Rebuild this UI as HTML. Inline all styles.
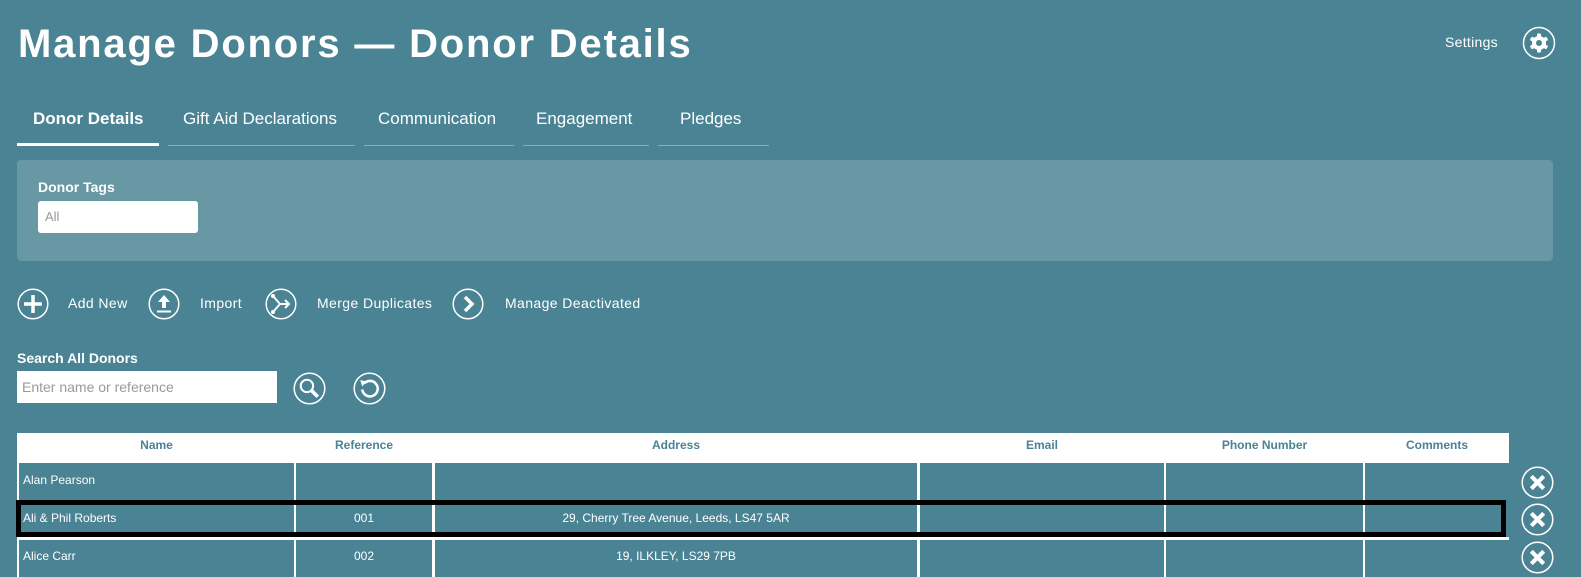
<!DOCTYPE html>
<html><head><meta charset="utf-8"><style>
*{margin:0;padding:0;box-sizing:border-box}
body{width:1581px;height:577px;overflow:hidden;background:#4a8393;font-family:"Liberation Sans",sans-serif;color:#fff;position:relative}
.a{position:absolute;white-space:nowrap}
.t{font-size:17px}
.ul{position:absolute;height:1px;background:#86aeb9;top:144px}
.lbl{font-size:14px;font-weight:bold}
.act{font-size:14px;letter-spacing:0.4px}
.cell{position:absolute;background:#4a8393;font-size:12px;line-height:1}
.th{position:absolute;top:438px;font-size:12px;color:#4a8393;font-weight:bold;text-align:center}
svg{position:absolute}
</style></head><body>
<div class="a" style="left:18px;top:22px;font-size:40px;font-weight:bold;letter-spacing:1.8px">Manage Donors — Donor Details</div>
<div class="a" style="left:1445px;top:34px;font-size:14px;letter-spacing:0.3px">Settings</div>
<svg style="left:1522px;top:26px" width="34" height="34" viewBox="0 0 34 34"><circle cx="17" cy="17" r="15.5" fill="none" stroke="#fff" stroke-width="1.5"/><g fill="#fff"><circle cx="17" cy="17" r="7"/><rect x="15" y="7.5" width="4" height="19" rx="1"/><rect x="15" y="7.5" width="4" height="19" rx="1" transform="rotate(60 17 17)"/><rect x="15" y="7.5" width="4" height="19" rx="1" transform="rotate(120 17 17)"/></g><circle cx="17" cy="17" r="3" fill="#4a8393"/></svg>

<div class="a t" style="left:33px;top:109px;font-weight:bold">Donor Details</div>
<div class="a t" style="left:183px;top:109px">Gift Aid Declarations</div>
<div class="a t" style="left:378px;top:109px">Communication</div>
<div class="a t" style="left:536px;top:109px">Engagement</div>
<div class="a t" style="left:680px;top:109px">Pledges</div>
<div class="ul" style="left:17px;width:142px;height:3px;top:143px;background:#fff"></div>
<div class="ul" style="left:168px;width:187px;top:145px"></div>
<div class="ul" style="left:364px;width:150px;top:145px"></div>
<div class="ul" style="left:523px;width:126px;top:145px"></div>
<div class="ul" style="left:658px;width:111px;top:145px"></div>

<div class="a" style="left:17px;top:160px;width:1536px;height:101px;background:#6798a4;border-radius:4px"></div>
<div class="a lbl" style="left:38px;top:179px">Donor Tags</div>
<div class="a" style="left:38px;top:201px;width:160px;height:32px;background:#fff;border-radius:3px;color:#999;font-size:13px;padding:8px 7px">All</div>

<svg style="left:17px;top:288px" width="32" height="32" viewBox="0 0 32 32"><circle cx="16" cy="16" r="14.8" fill="none" stroke="#fff" stroke-width="1.5"/><path d="M16 7v18M7 16h18" stroke="#fff" stroke-width="3.5"/></svg>
<div class="a act" style="left:68px;top:295px">Add New</div>
<svg style="left:148px;top:288px" width="32" height="32" viewBox="0 0 32 32"><circle cx="16" cy="16" r="14.8" fill="none" stroke="#fff" stroke-width="1.5"/><path d="M16 7l-6 7h4v6h4v-6h4z" fill="#fff"/><path d="M9 23.5h14" stroke="#fff" stroke-width="2"/></svg>
<div class="a act" style="left:200px;top:295px">Import</div>
<svg style="left:265px;top:288px" width="32" height="32" viewBox="0 0 32 32"><circle cx="16" cy="16" r="14.8" fill="none" stroke="#fff" stroke-width="1.5"/><path d="M8 8l7 8-7 8M15 16h9M20 12l4 4-4 4" fill="none" stroke="#fff" stroke-width="2"/><circle cx="8" cy="8" r="2" fill="#fff"/><circle cx="8" cy="24" r="2" fill="#fff"/></svg>
<div class="a act" style="left:317px;top:295px">Merge Duplicates</div>
<svg style="left:452px;top:288px" width="32" height="32" viewBox="0 0 32 32"><circle cx="16" cy="16" r="14.8" fill="none" stroke="#fff" stroke-width="1.5"/><path d="M13 9l7 7-7 7" fill="none" stroke="#fff" stroke-width="3.5"/></svg>
<div class="a act" style="left:505px;top:295px">Manage Deactivated</div>

<div class="a lbl" style="left:17px;top:350px">Search All Donors</div>
<div class="a" style="left:17px;top:371px;width:260px;height:32px;background:#fff;color:#999;font-size:14px;padding:8px 5px">Enter name or reference</div>
<svg style="left:293px;top:372px" width="33" height="33" viewBox="0 0 32 32"><circle cx="16" cy="16" r="14.8" fill="none" stroke="#fff" stroke-width="1.5"/><circle cx="13.5" cy="13.5" r="6" fill="none" stroke="#fff" stroke-width="2"/><path d="M18 18l6 6" stroke="#fff" stroke-width="3.5"/></svg>
<svg style="left:353px;top:372px" width="33" height="33" viewBox="0 0 32 32"><circle cx="16" cy="16" r="14.8" fill="none" stroke="#fff" stroke-width="1.5"/><path d="M11 11a7.5 7.5 0 1 1-2 6" fill="none" stroke="#fff" stroke-width="2.5"/><path d="M7 8l6 1-4 5z" fill="#fff"/></svg>

<div class="a" style="left:17px;top:433px;width:1492px;height:144px;background:#fff"></div>
<div class="th" style="left:19px;width:275px">Name</div>
<div class="th" style="left:296px;width:136px">Reference</div>
<div class="th" style="left:435px;width:482px">Address</div>
<div class="th" style="left:920px;width:244px">Email</div>
<div class="th" style="left:1166px;width:197px">Phone Number</div>
<div class="th" style="left:1365px;width:144px">Comments</div>

<div class="cell" style="left:19px;top:463px;width:275px;height:37px;padding:11px 4px">Alan Pearson</div>
<div class="cell" style="left:296px;top:463px;width:136px;height:37px"></div>
<div class="cell" style="left:435px;top:463px;width:482px;height:37px"></div>
<div class="cell" style="left:920px;top:463px;width:244px;height:37px"></div>
<div class="cell" style="left:1166px;top:463px;width:197px;height:37px"></div>
<div class="cell" style="left:1365px;top:463px;width:144px;height:37px"></div>

<div class="cell" style="left:19px;top:500px;width:275px;height:37px;padding:12px 4px">Ali &amp; Phil Roberts</div>
<div class="cell" style="left:296px;top:500px;width:136px;height:37px;padding-top:12px;text-align:center">001</div>
<div class="cell" style="left:435px;top:500px;width:482px;height:37px;padding-top:12px;text-align:center">29, Cherry Tree Avenue, Leeds, LS47 5AR</div>
<div class="cell" style="left:920px;top:500px;width:244px;height:37px"></div>
<div class="cell" style="left:1166px;top:500px;width:197px;height:37px"></div>
<div class="cell" style="left:1365px;top:500px;width:144px;height:37px"></div>
<div class="a" style="left:16px;top:500px;width:1490px;height:37px;border:5px solid #000"></div>

<div class="cell" style="left:19px;top:540px;width:275px;height:37px;padding:10px 4px">Alice Carr</div>
<div class="cell" style="left:296px;top:540px;width:136px;height:37px;padding-top:10px;text-align:center">002</div>
<div class="cell" style="left:435px;top:540px;width:482px;height:37px;padding-top:10px;text-align:center">19, ILKLEY, LS29 7PB</div>
<div class="cell" style="left:920px;top:540px;width:244px;height:37px"></div>
<div class="cell" style="left:1166px;top:540px;width:197px;height:37px"></div>
<div class="cell" style="left:1365px;top:540px;width:144px;height:37px"></div>

<svg style="left:1521px;top:466px" width="33" height="33" viewBox="0 0 32 32"><circle cx="16" cy="16" r="14.8" fill="none" stroke="#fff" stroke-width="1.5"/><path d="M10 10l12 12M22 10L10 22" stroke="#fff" stroke-width="4"/></svg>
<svg style="left:1521px;top:503px" width="33" height="33" viewBox="0 0 32 32"><circle cx="16" cy="16" r="14.8" fill="none" stroke="#fff" stroke-width="1.5"/><path d="M10 10l12 12M22 10L10 22" stroke="#fff" stroke-width="4"/></svg>
<svg style="left:1521px;top:541px" width="33" height="33" viewBox="0 0 32 32"><circle cx="16" cy="16" r="14.8" fill="none" stroke="#fff" stroke-width="1.5"/><path d="M10 10l12 12M22 10L10 22" stroke="#fff" stroke-width="4"/></svg>
</body></html>
